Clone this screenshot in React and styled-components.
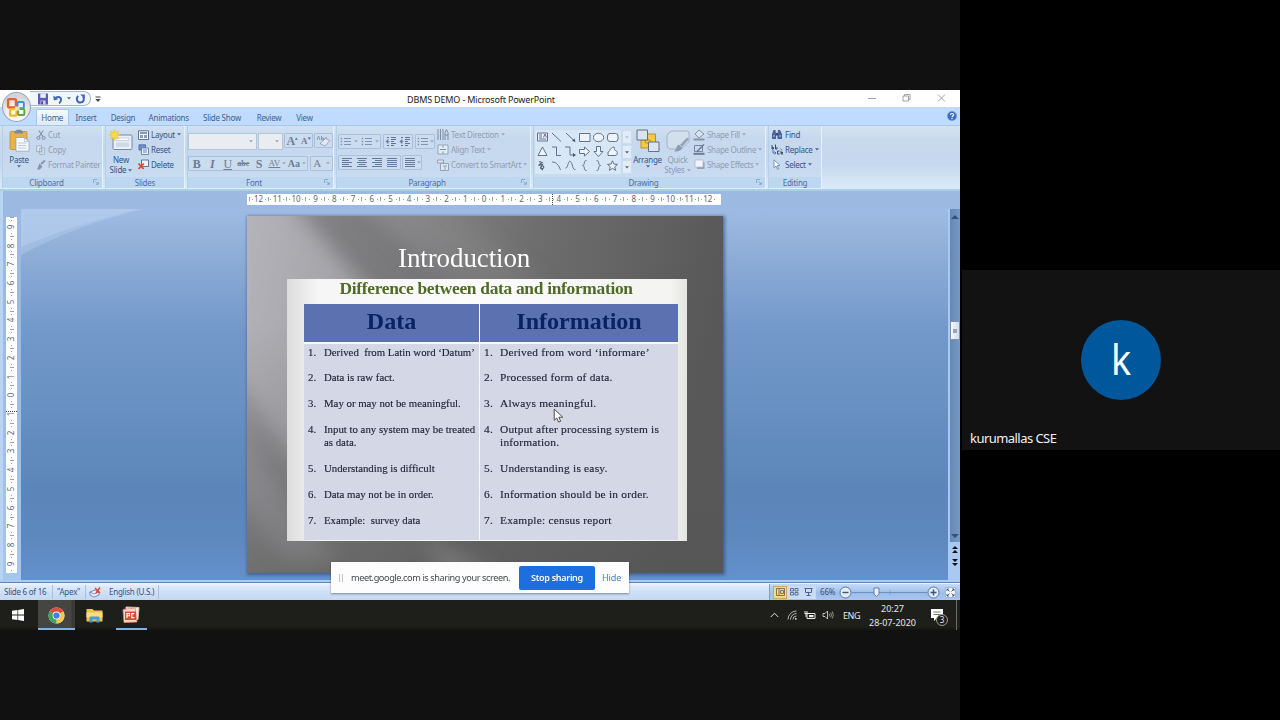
import React from 'react';
import styled, { createGlobalStyle, css } from 'styled-components';

const Global = createGlobalStyle`
  * { box-sizing: border-box; }
  html, body { margin: 0; padding: 0; background: #000; }
  body { width: 1280px; height: 720px; overflow: hidden; font-family: "Noto Sans", "Open Sans", sans-serif; }
  svg { display: block; flex: none; }
`;

const Page = styled.div`
  display: flex;
  width: 1280px;
  height: 720px;
  background: #000;
`;
const Share = styled.main`
  width: 960px;
  height: 720px;
  padding: 90px 0;
  background: #111111;
`;
const Desktop = styled.div`
  position: relative;
  display: flex;
  flex-direction: column;
  width: 960px;
  height: 540px;
`;

const T = styled.span`
  font-size: ${p => p.$s || 8}px;
  letter-spacing: ${p => p.$ls ?? -0.24}px;
  color: ${p => p.$c || 'inherit'};
  font-weight: ${p => p.$b || 400};
  white-space: pre;
  line-height: 1;
`;

/* ---------- title bar ---------- */
const TitleBar = styled.header`
  position: relative;
  display: flex;
  align-items: center;
  justify-content: center;
  height: 17px;
  background: #fff;
  padding: 1px 0 0 2px;
`;
const QuickAccess = styled.div`
  position: absolute;
  left: 30px;
  top: 1px;
  display: flex;
  align-items: center;
  gap: 4px;
  width: 61px;
  height: 15px;
  padding-left: 7px;
  background: #f1f5fc;
  border: 1px solid #a9b5cc;
  border-left: 0;
  border-radius: 0 7px 7px 0;
`;
const QuickMore = styled.div`
  position: absolute;
  left: 95px;
  top: 6px;
`;
const WindowButtons = styled.div`
  position: absolute;
  right: 14px;
  top: 3px;
  display: flex;
  gap: 26px;
`;
const OfficeButton = styled.div`
  position: absolute;
  left: 2px;
  top: 2px;
  z-index: 3;
  display: grid;
  place-items: center;
  width: 29px;
  height: 30px;
  border-radius: 50%;
  border: 1px solid #98a3b5;
  background: radial-gradient(circle at 50% 75%, #fff 0, #f1f1f1 35%, #cfd3dc 75%, #eef0f4 100%);
`;

/* ---------- tabs ---------- */
const TabRow = styled.nav`
  display: flex;
  align-items: flex-end;
  height: 18px;
  padding-left: 36px;
  background: #bfdbff;
`;
const Tab = styled.div`
  display: flex;
  align-items: center;
  justify-content: center;
  width: ${p => p.$w}px;
  height: 16px;
  padding-top: 1px;
  color: #3f5f92;
  ${p => p.$on && css`
    background: linear-gradient(#f5faff, #dfeaf8);
    border: 1px solid #a7c6ee;
    border-bottom: 0;
    border-radius: 2px 2px 0 0;
    padding-top: 0;
  `}
`;
const HelpSlot = styled.div`
  margin: 0 3px 4px auto;
`;

/* ---------- ribbon ---------- */
const Ribbon = styled.section`
  display: flex;
  gap: 2px;
  height: 66px;
  padding: 0 0 0 2px;
  border-top: 1px solid #a9c8e8;
  border-bottom: 2px solid #a8d0e2;
  background: linear-gradient(#d4e2f1 0, #c9d9ec 22%, #c5d8ee 60%, #d9ebf9 100%);
`;
const Group = styled.div`
  display: flex;
  flex-direction: column;
  width: ${p => p.$w}px;
  border-right: 1px solid #e6f2fb;
  border-left: 1px solid #b4cfe8;
  border-bottom: 1px solid #e2f1fa;
  background: linear-gradient(#d2e1f2 0, #c5d8ed 20%, #c7daef 75%, #cfe1f3 100%);
`;
const GroupBody = styled.div`
  display: flex;
  height: 51px;
  padding: ${p => p.$p || '0'};
`;
const GroupTitle = styled.div`
  display: flex;
  align-items: center;
  justify-content: center;
  position: relative;
  height: 11px;
  padding-right: ${p => p.$pr || 0}px;
  color: #4a6ea6;
  background: #bed7f1;
`;
const Launcher = styled.div`
  position: absolute;
  right: 3px;
  top: 2px;
`;
const BigButton = styled.div`
  display: flex;
  flex-direction: column;
  align-items: center;
  width: ${p => p.$w}px;
  padding-top: 3px;
  color: ${p => (p.$dim ? '#8e9bb0' : '#33548c')};
`;
const BigText = styled.div`
  display: flex;
  align-items: center;
  gap: 2px;
  height: 10px;
  margin-top: ${p => p.$mt || 0}px;
`;
const Stack = styled.div`
  display: flex;
  flex-direction: column;
  padding-top: 1px;
  margin-left: ${p => p.$ml || 0}px;
`;
const Command = styled.div`
  display: flex;
  align-items: center;
  gap: ${p => p.$g || 2}px;
  height: 15px;
  color: ${p => (p.$dim ? '#909db0' : '#33548c')};
`;
const ToolArea = styled.div`
  padding-top: ${p => p.$pt}px;
`;
const ToolRow = styled.div`
  display: flex;
  gap: ${p => p.$g || 2}px;
  padding-top: ${p => p.$pt || 0}px;
  margin-bottom: ${p => p.$mb || 0}px;
`;
const Combo = styled.div`
  display: flex;
  align-items: center;
  justify-content: flex-end;
  width: ${p => p.$w}px;
  height: 17px;
  padding-right: 3px;
  background: #e9edf1;
  border: 1px solid #b6c6da;
`;
const ToolBox = styled.div`
  display: flex;
  align-items: center;
  justify-content: ${p => (p.$start ? 'flex-start' : 'space-around')};
  width: ${p => p.$w}px;
  height: 15px;
  border: 1px solid #a9c0dc;
  border-radius: 1px;
  background: #cbdcef;
  color: #6c7d98;
`;
const Glyph = styled.span`
  width: ${p => (p.$w ? p.$w + 'px' : 'auto')};
  text-align: center;
  font: ${p => p.$f || ''} ${p => p.$s || 10}px/1 "Liberation Serif", serif;
  text-decoration: ${p => p.$d || 'none'};
`;
const Tip = styled.sup`
  font-size: 5px;
`;

const Gallery = styled.div`
  display: grid;
  grid-template-columns: repeat(6, 14px);
  grid-auto-rows: 14px;
  place-items: center;
  width: 86px;
  height: 44px;
  padding: 1px;
  background: #d8e7f5;
`;
const GalleryScroll = styled.div`
  display: flex;
  flex-direction: column;
  gap: 1px;
  width: 10px;
  height: 44px;
`;
const ScrollStep = styled.div`
  display: grid;
  place-items: center;
  flex: 1;
  border: 1px solid #cddceb;
  background: #e1ecf7;
`;

/* ---------- work area ---------- */
const Work = styled.section`
  display: grid;
  grid-template-columns: 21px 1fr 12px;
  grid-template-rows: 18px 371px;
  height: 389px;
  background: linear-gradient(#9bb9e1 0, #9bb9e1 30%, #a6c6ee 100%);
`;
const TopRulerSlot = styled.div`
  grid-column: 1 / 4;
  padding: 3px 0 0 244px;
  border-left: 3px solid #b9d3f3;
`;
const HRuler = styled.div`
  display: flex;
  justify-content: center;
  width: 474px;
  height: 11px;
  padding-right: 2px;
  background: #fff;
  position: relative;
`;
const HCell = styled.div`
  display: flex;
  align-items: center;
  justify-content: space-between;
  width: 18.72px;
  height: 10px;
  padding-right: 2px;
  color: #5d6470;
`;
const VCell = styled.div`
  display: flex;
  flex-direction: column;
  align-items: center;
  justify-content: space-between;
  height: 18.72px;
  padding-bottom: 2px;
  color: #5d6470;
`;
const Tick = styled.i`
  width: ${p => (p.$v ? 4 : 1)}px;
  height: ${p => (p.$v ? 1 : 4)}px;
  background: #98a0ac;
`;
const Dot = styled.i`
  width: 1px;
  height: 1px;
  background: #98a0ac;
`;
const HMark = styled.div`
  position: absolute;
  left: 305px;
  top: 0;
  height: 11px;
  border-left: 1px dotted #444;
`;
const LeftRulerSlot = styled.div`
  padding: 8px 0 0 3px;
  border-left: 3px solid #b9d3f3;
`;
const VRuler = styled.div`
  position: relative;
  display: flex;
  flex-direction: column;
  width: 11px;
  height: 356px;
  background: #fff;
`;
const VNum = styled.span`
  font-size: 8px;
  line-height: 8px;
  height: 8px;
  transform: rotate(-90deg);
`;
const VMark = styled.div`
  position: absolute;
  left: 0;
  top: 194px;
  width: 11px;
  border-top: 1px dotted #444;
`;
const Canvas = styled.div`
  position: relative;
  padding: 7px 0 0 226px;
  background: linear-gradient(#9dbbe4 0, #94b2da 8%, #83a5d3 20%, #7298c9 33%, #6a92c3 50%, #5c86b9 75%, #5d88be 88%, #6391cc 100%);
`;
const Swoosh = styled.svg`
  position: absolute;
  left: 0;
  top: 0;
`;
const Slide = styled.article`
  position: relative;
  width: 476px;
  height: 357px;
  overflow: hidden;
  background: #5c5c5c;
`;
const SlideShadow = styled.div`
  position: relative;
  width: 476px;
  box-shadow: 1px 1px 3px 1px rgba(40, 60, 100, 0.55);
`;
const SlideArt = styled.svg`
  position: absolute;
  inset: 0;
`;
const SlideTitle = styled.h1`
  position: relative;
  margin: 0;
  padding: 28px 0 0 151px;
  height: 63px;
  font: 400 27px/28px "Liberation Serif", serif;
  letter-spacing: -0.1px;
  color: #fff;
`;
const Board = styled.div`
  position: relative;
  width: 400px;
  height: 262px;
  margin-left: 39.5px;
  padding: 0 9px 0 17.5px;
  background: linear-gradient(90deg, #dcdcdd, #f6f6f6 8%, #fbfbfb 50%, #f3f3f2 96%, #e4e4df);
`;
const BoardTitle = styled.h2`
  margin: 0;
  height: 25px;
  padding-left: 35.5px;
  font: 700 17.4px/18px "Liberation Serif", serif;
  letter-spacing: -0.3px;
  white-space: nowrap;
  color: #4f6b25;
`;
const Table = styled.div`
  display: grid;
  grid-template-columns: 175px 198px;
  grid-template-rows: 38px 196px;
  gap: 1.5px 1px;
  background: #f7f8fc;
`;
const Th = styled.div`
  display: flex;
  align-items: center;
  justify-content: center;
  padding-bottom: 5px;
  background: #5c71b0;
  color: #0b2262;
  font: 700 24px/1 "Liberation Serif", serif;
`;
const Td = styled.ol`
  display: flex;
  flex-direction: column;
  gap: 13px;
  margin: 0;
  padding: ${p => p.$pt}px 0 0 4px;
  list-style: none;
  background: #d3d7e6;
  color: #23263a;
  font: 400 ${p => p.$s}px/12.95px "Liberation Serif", serif;
  letter-spacing: ${p => p.$ls}px;
  -webkit-text-stroke: 0.15px #23263a;
`;
const Item = styled.li`
  display: flex;
  white-space: pre;
`;
const Num = styled.span`
  width: 16px;
`;
const Cursor = styled.svg`
  position: absolute;
  left: 553px;
  top: 318px;
`;
const VScroll = styled.div`
  display: flex;
  flex-direction: column;
  align-items: center;
  border-left: 2px solid #a9c8f2;
  background: #a9c9f3;
`;
const Track = styled.div`
  display: flex;
  flex-direction: column;
  align-items: center;
  width: 10px;
  height: 333px;
  padding: 5px 0 3px;
  background: linear-gradient(90deg, #6488b4, #7799c4);
`;
const Thumb = styled.div`
  display: grid;
  place-items: center;
  width: 10px;
  height: 19px;
  margin: 102px 0 auto;
  background: linear-gradient(90deg, #f5f8fc, #cfdcec);
  border: 1px solid #7f93b0;
`;
const ThumbGrip = styled.div`
  width: 4px;
  height: 4px;
  background: #98a4b4;
`;
const PageArrows = styled.div`
  display: flex;
  flex-direction: column;
  gap: 6px;
  padding-top: 4px;
`;

/* ---------- status bar ---------- */
const Status = styled.footer`
  display: flex;
  align-items: center;
  height: 20px;
  padding: 4px 0 0 4px;
  color: #38527f;
  background: linear-gradient(#a9ccf6 0, #a9ccf6 10%, #5f84b8 11%, #5f84b8 15%, #eef5fd 16%, #dde9fa 32%, #cfe0f7 60%, #c3d8f3 100%);
`;
const Cell = styled.div`
  display: flex;
  align-items: center;
  width: ${p => p.$w}px;
  height: 14px;
  padding-left: ${p => p.$pl || 0}px;
  border-right: 1px solid ${p => (p.$line ? '#a9bfdd' : 'transparent')};
`;
const StatusRight = styled.div`
  display: flex;
  align-items: center;
  width: 191px;
  height: 16px;
  margin-left: auto;
  border-left: 1px solid #7f9fca;
  background: linear-gradient(#c5daf6, #9dbde9 60%, #a9c6ef);
`;
const Views = styled.div`
  display: flex;
  align-items: center;
  width: 43px;
  height: 13px;
  margin-left: 3px;
  background: #cadcf4;
`;
const View = styled.div`
  display: grid;
  place-items: center;
  width: 14.3px;
  height: 13px;
  ${p => p.$on && css`
    background: #fbd58a;
    border: 1px solid #d9a552;
  `}
`;

/* ---------- taskbar ---------- */
const Taskbar = styled.footer`
  display: flex;
  height: 30px;
  background: linear-gradient(#1e1e1b 0, #1e1e1b 88%, #141412 100%);
  color: #e8e8e8;
`;
const Task = styled.div`
  display: grid;
  place-items: center;
  width: ${p => p.$w}px;
  height: 30px;
  padding-right: ${p => p.$pr || 0}px;
  background: ${p => (p.$on ? 'linear-gradient(90deg, #454543 0, #454543 90%, #393937 91%)' : 'none')};
  ${p => p.$run && css`
    border-bottom: 2px solid #7db4e6;
    padding-top: 2px;
  `}
`;
const Tray = styled.div`
  display: flex;
  align-items: center;
  margin-left: auto;
`;
const TrayCell = styled.div`
  display: flex;
  justify-content: center;
  width: ${p => p.$w}px;
`;
const Clock = styled.div`
  display: flex;
  flex-direction: column;
  align-items: center;
  gap: 5px;
  width: 53px;
`;
const PeekLine = styled.div`
  width: 1px;
  height: 30px;
  margin-right: 3px;
  background: #6d6d6a;
`;
const Badge = styled.div`
  position: relative;
`;
const Count = styled.div`
  position: absolute;
  left: 5px;
  top: 5px;
  display: grid;
  place-items: center;
  width: 12px;
  height: 12px;
  border: 1px solid #9b9b98;
  border-radius: 50%;
  background: #1f1f1c;
`;

/* ---------- share bar ---------- */
const ShareBar = styled.div`
  position: absolute;
  left: 331px;
  top: 472px;
  z-index: 4;
  display: flex;
  align-items: center;
  width: 298px;
  height: 31px;
  padding-left: 8px;
  background: #fdfdfe;
  box-shadow: 0 1px 2px rgba(0, 0, 0, 0.4);
  color: #45484c;
`;
const Grip = styled.div`
  width: 4px;
  height: 8px;
  margin-right: 8px;
  border: solid #bfc1c4;
  border-width: 0 1px;
`;
const Message = styled.div`
  display: flex;
  width: 168px;
`;
const StopButton = styled.div`
  display: grid;
  place-items: center;
  width: 76px;
  height: 24px;
  margin-right: 7px;
  border-radius: 2px;
  background: #1b6fe0;
  color: #fff;
`;

/* ---------- participant ---------- */
const Side = styled.aside`
  display: flex;
  align-items: center;
  width: 320px;
  padding-left: 2px;
`;
const Tile = styled.div`
  display: flex;
  flex-direction: column;
  width: 318px;
  height: 180px;
  padding-top: 50px;
  background: #121212;
`;
const Avatar = styled.div`
  display: grid;
  place-items: center;
  width: 80px;
  height: 80px;
  margin-left: 119px;
  padding-bottom: 2px;
  border-radius: 50%;
  background: #01579b;
  color: #fff;
  font: 400 41px/1 "Noto Sans", sans-serif;
`;
const Initial = styled.span`
  transform: scaleX(0.92);
`;
const Name = styled.div`
  display: flex;
  margin: 32px 0 0 8px;
  color: #f1f1f1;
`;

/* ---------- icons ---------- */
const Ico = ({ w = 11, h = w, vb, children }) => (
  <svg width={w} height={h} viewBox={vb || `0 0 ${w} ${h}`} fill="none" strokeLinecap="butt">{children}</svg>
);
const Caret = ({ c = '#4b6594' }) => <Ico w={4} h={3}><path d="M0 .3h4L2 2.6z" fill={c} /></Ico>;
const DimCaret = () => <Caret c="#9aa8bd" />;

const SaveIcon = () => <Ico w={12}><path d="M1 .5h10v11H1z" fill="#5d5ab4" /><path d="M3.3.5h5.5v4.4H3.3z" fill="#e8ecfa" /><path d="M3.5 7.5h5v4h-5z" fill="#cfd0ee" /><path d="M4.3 8.2h1.6v3H4.3z" fill="#34348a" /></Ico>;
const UndoIcon = () => <Ico w={10}><path d="M2 4.500C4 2 8.200 2.500 8 5.800 7.900 7.600 7 8.800 6 9.200" stroke="#4167b8" strokeWidth="2" /><path d="M.3 1.500l.5 5 4.400-1.300z" fill="#4167b8" /></Ico>;
const RedoIcon = () => <Ico w={11} h={10}><path d="M3 1.800C.8 4.500 2 8.600 5.200 8.600c3.400 0 4.700-3.600 2.900-6" stroke="#3f63b5" strokeWidth="2" /><path d="M5.200.5h4.600v4.200z" fill="#3f63b5" /></Ico>;
const OfficeLogo = () => (
  <Ico w={21} h={21} vb="0 0 20 20">
    <rect x="2" y="2" width="7.500" height="8" rx="1" stroke="#e0662a" strokeWidth="2.300" />
    <rect x="11" y="4.700" width="6" height="6" rx="1" stroke="#3d8fd8" strokeWidth="1.800" />
    <rect x="4" y="11.500" width="6" height="6.300" rx="1" stroke="#f2b824" strokeWidth="2.200" />
    <rect x="11.500" y="11.500" width="6" height="5.700" rx="1" stroke="#62a845" strokeWidth="1.900" />
    <path d="M8.500 9h4.500v4H8.500z" fill="#fdf0d0" opacity=".8" />
  </Ico>
);
const HelpIcon = () => <Ico w={10}><circle cx="5" cy="5" r="4.700" fill="#3c6fc4" stroke="#7ea2d8" strokeWidth=".6" /><path d="M3.400 3.900c.1-2 3.300-1.900 3.200 0C6.500 5 5 4.900 5 6.200M5 7.100v1.200" stroke="#fff" strokeWidth="1.100" /></Ico>;

const PasteIcon = () => (
  <Ico w={21} h={23}>
    <rect x="1" y="2.500" width="17" height="18" rx="1" fill="#e9b14c" stroke="#bb8530" strokeWidth=".7" />
    <path d="M5.500 4.500V2.500L8 .8h3.500l2.500 1.700v2z" fill="#7e8896" />
    <path d="M7 8.500h8.500l4.500 4v9.700H7z" fill="#f7fafd" stroke="#8b9bb5" strokeWidth=".7" />
    <path d="M15.500 8.500v4H20M9 14h8.500M9 16.500h8.500M9 19h8.500" stroke="#a6b4ca" strokeWidth=".7" />
  </Ico>
);
const CutIcon = () => <Ico w={10}><path d="M2.800.5l4 6M7.200.5l-4 6" stroke="#7f8fa8" strokeWidth="1.100" /><circle cx="2.400" cy="7.900" r="1.500" stroke="#7f8fa8" /><circle cx="7.600" cy="7.900" r="1.500" stroke="#7f8fa8" /></Ico>;
const CopyIcon = () => <Ico w={10}><path d="M.7.700h4.800v6H.7zM3.700 3h5v6.300h-5z" fill="#dfe8f2" stroke="#94a3ba" strokeWidth=".8" /><path d="M5 5h2.500M5 7h2.500" stroke="#94a3ba" strokeWidth=".7" /></Ico>;
const BrushIcon = () => <Ico w={10}><path d="M8.800.5L5.200 4" stroke="#8594ac" strokeWidth="1.800" /><path d="M3.500 3.600l3 2.900-2.600 3H1z" fill="#8594ac" /></Ico>;
const EraserIcon = () => <Ico w={15} h={12}><path d="M1 5l1.500-4L4 5M5.500 1v4h2V3h-2M11 3H9v2h2" stroke="#7a8aa4" strokeWidth=".8" /><path d="M4 8.500L9.500 3.500 14 5.500 9 11z" fill="#e3ebf5" stroke="#8c9bb3" strokeWidth=".8" /></Ico>;
const NewSlideIcon = () => (
  <Ico w={24} h={22}>
    <rect x="4" y="6" width="19" height="14.500" rx="1" fill="#eaf0f8" stroke="#7488a8" />
    <path d="M7 9h13v2.500H7z" fill="#fff" stroke="#a9b7cc" strokeWidth=".6" /><path d="M7 13.500h13v4.500H7z" fill="#cfd9e8" />
    <path d="M5.500.5l1 3 3-1.500-1 3 3 .8-3 1.200 1 3-3-1.300-1 2.800-1-2.800-3 1.300 1-3-2-1.200 2-.8-1-3 3 1.500z" fill="#f8d845" stroke="#e6b92e" strokeWidth=".5" />
  </Ico>
);
const LayoutIcon = () => <Ico w={11} h={10}><path d="M.5.800h10v8.700H.5z" fill="#f2f6fb" stroke="#5f7496" /><path d="M2 3h7" stroke="#5f7496" strokeWidth="1.400" /><path d="M2 5h3v3H2zM6 5h3v3H6z" fill="#8ba0c0" /></Ico>;
const ResetIcon = () => <Ico w={11} h={11}><path d="M1 .8h6.500V6H1z" fill="#6a93d4" stroke="#3f62a5" strokeWidth=".8" /><path d="M3.500 4h7v6.500h-7z" fill="#eef3fa" stroke="#5f7496" strokeWidth=".8" /><path d="M5 6h4M5 8h4" stroke="#5f86c0" /></Ico>;
const DeleteIcon = () => <Ico w={11} h={11}><path d="M3.500 1h7v6.500h-7z" fill="#eef3fa" stroke="#50678f" strokeWidth=".9" /><path d="M.6 4.500l5 5.500M5.800 4.500L.6 10" stroke="#e04a2b" strokeWidth="1.800" /></Ico>;

const Lines = ({ w = 12, a = [10, 7, 10, 7, 10], al = 'l' }) => (
  <Ico w={w} h={9}>{a.map((n, i) => {
    const x = al === 'l' ? 1 : al === 'c' ? (w - n) / 2 : w - 1 - n;
    return <path key={i} d={`M${x} ${0.5 + i * 2}h${n}`} stroke="#6379a0" />;
  })}</Ico>
);
const full = [10, 10, 10, 10, 10];
const Bullets = () => <Ico w={12} h={9}><path d="M4 1.500h7M4 4.500h7M4 7.500h7" stroke="#8093b2" /><path d="M.7 1.500h1.500M.7 4.500h1.500M.7 7.500h1.500" stroke="#8093b2" strokeWidth="1.300" /></Ico>;
const Indent = () => <Ico w={12} h={9}><path d="M6 .5h5M6 2.500h5M6 4.500h3M6 6.500h5M6 8.500h3M2 .5h2M2 8.500h2" stroke="#5e7294" /><path d="M1 4.500l2-2v4zM3 4.500h1.500" fill="#5e7294" stroke="#5e7294" strokeWidth=".6" /></Ico>;
const TextDirIcon = () => <Ico w={12} h={11}><path d="M1 0v11M3.500 0v11M6 0v11M8 11V3.500l1.500-3 1.500 3V11M8 6h3" stroke="#7f8ea6" /></Ico>;
const AlignTextIcon = () => <Ico w={12} h={11}><path d="M1 1h10v9H1z" fill="#e3ebf4" stroke="#94a3ba" /><path d="M3 5.500h6M6 1.500v2M6 7.500v2" stroke="#7f8ea6" /></Ico>;
const SmartIcon = () => <Ico w={12} h={12}><path d="M.5 1h6v3h-6zM3.500 4.500h8v7h-8z" fill="#dfe7f1" stroke="#94a3ba" /><path d="M6 7h4M8 7v4" stroke="#94a3ba" /></Ico>;

const shapePaths = [
  <><path d="M.5 1h10v8H.5z" fill="#e8eff8" /><path d="M2 3h3M2 5h3M2 7h7M6.500 5.500L8 2l1.500 3.500" /></>,
  <path d="M1 1l9 8.500" />,
  <><path d="M1 1l8 7.500" /><path d="M10.500 10l-3.500-1L9.500 6.500z" fill="#46536b" stroke="none" /></>,
  <path d="M.5 1.500h10.500v8H.5z" fill="#eef4fb" />,
  <ellipse cx="5.500" cy="5.500" rx="5.200" ry="4.200" fill="#eef4fb" />,
  <rect x=".5" y="1.500" width="10.500" height="8" rx="2.500" fill="#eef4fb" />,
  <path d="M5.500 1L10 9.500H1z" fill="#eef4fb" />,
  <path d="M1 1h4.500v8.500H10" />,
  <><path d="M0 1h5v8h3" /><path d="M11 9L8 7v4z" fill="#46536b" stroke="none" /></>,
  <path d="M.5 3.500h5V1L10.500 5.500 5.500 10V7.500h-5z" fill="#eef4fb" />,
  <path d="M3.500.5v5H1l4.500 5 4.500-5H7.500v-5z" fill="#eef4fb" />,
  <path d="M1 9.500V6C3 6 2.500 1.500 7 1c1 0-.5 3 1.500 3.500C11 5 11 9.500 8 9.500z" fill="#eef4fb" />,
  <path d="M2 1.500l3 1-3.500 3 4-1-2 3.500c2 2 4.500-1 2.500-2S2.500 8 6 10" strokeWidth="1.200" />,
  <path d="M1 2c5 0 7 4 8.500 8" />,
  <path d="M.5 8C3 9 3-.5 5.500 1.500S7 10 10.500 9.500" />,
  <path d="M7.500.5C4 .5 6.500 5 3.500 5.500 6.500 6 4 10.500 7.500 10.500" />,
  <path d="M3.500.5C7 .5 4.500 5 7.500 5.500 4.500 6 7 10.500 3.500 10.500" />,
  <path d="M5.500.8l1.400 3.300 3.600.3-2.700 2.400.8 3.500-3.100-1.900-3.100 1.900.8-3.500L.5 4.400l3.600-.3z" fill="#eef4fb" />,
];
const ArrangeIcon = () => <Ico w={24} h={24}><path d="M9.500 5h10v9h-10zM5 11h9v8H5z" fill="#f7c93f" stroke="#b8902a" /><path d="M1 1h10.500v10H1zM12.500 13h10.500v9.500H12.500z" fill="#dbe3ec" stroke="#61718a" /></Ico>;
const QuickIcon = () => <Ico w={24} h={24}><path d="M6 2h15q2 0 2 2v9q-5 5-8 7H4q-3-1-3-4V7q1-4 5-5z" fill="#d4dfec" stroke="#a4b3c8" /><path d="M22 9.500l-7 7.500" stroke="#98a7bd" strokeWidth="3" /><path d="M12.500 15.500l4 3.500c-2 3-5 3.500-8.500 3.500 2-1 2.500-5.500 4.500-7z" fill="#8b9ab2" /></Ico>;
const FillIcon = () => <Ico w={12} h={12}><path d="M6 1l5 4-5 4-4-4z" fill="#d9e2ee" stroke="#8291a9" /><path d="M.5 9.500h11V11.500H.5z" fill="#8794a8" /></Ico>;
const OutlineIcon = () => <Ico w={12} h={12}><path d="M1.500 1.500h8v6h-8z" stroke="#7686a0" /><path d="M11 .5L4 7.500" stroke="#6a7a95" strokeWidth="1.500" /><path d="M.5 9.800h11" stroke="#6d7b92" strokeWidth="2" /></Ico>;
const EffectsIcon = () => <Ico w={12} h={12}><path d="M4 3h7.500v7H4z" fill="#93a1b7" /><path d="M2 1h8v7H2z" fill="#f0f4f9" stroke="#a7b4c8" strokeWidth=".7" /></Ico>;
const FindIcon = () => <Ico w={12} h={11}><path d="M1 5l1.500-4h2L5 5v5H1zM6.500 5L7 1h2l2 4v5H6.500z" fill="#48649c" /><path d="M5 4h2v2.500H5z" fill="#2f4a82" /><path d="M2 7h2M8 7h2" stroke="#b9c9e4" /></Ico>;
const ReplaceIcon = () => <Ico w={12} h={12}><path d="M1 1v4M1 3.500h1.500v1.500H1M4.500.5V5H6V3M8.500 7h-2v3h2M10 7v3h2V8.500h-2" stroke="#3c4a63" /><path d="M2 6v3h2.500M3.500 7.500L5 9 3.500 10.500" stroke="#3f6ab3" strokeWidth=".9" /><path d="M9.500 4.500l1.500 2" stroke="#3f9a48" /></Ico>;
const PointerIcon = () => <Ico w={12} h={12}><path d="M3 .8v8l2-1.800L6.500 10.500l1.300-.6L6.300 6.500H9z" fill="#fff" stroke="#6680ae" strokeWidth=".8" /></Ico>;
const LauncherIcon = () => <Ico w={6}><path d="M.5 4V.5H4" stroke="#7f9cc6" strokeWidth=".8" /><path d="M2.500 2.500L5 5M5.300 3v2.300H3" stroke="#7f9cc6" strokeWidth=".8" /></Ico>;

const ChromeIcon = () => (
  <Ico w={17} vb="0 0 18 18">
    <circle cx="9" cy="9" r="8.500" fill="#f3f3f3" />
    <path d="M9 9L1.640 4.750A8.500 8.500 0 0 1 16.360 4.750z" fill="#e04a3a" />
    <path d="M9 9l7.360-4.250A8.500 8.500 0 0 1 9 17.500z" fill="#f6c945" />
    <path d="M9 9v8.500A8.500 8.500 0 0 1 1.640 4.750z" fill="#3ba55c" />
    <circle cx="9" cy="9" r="4.200" fill="#f2f2f2" /><circle cx="9" cy="9" r="3.300" fill="#3f7fe8" />
  </Ico>
);
const FolderIcon = () => <Ico w={17} h={15}><path d="M.5 1h6l1.500 1.500h8.500v11H.5z" fill="#eec24f" /><path d="M.5 4.500h16v5H.5z" fill="#f9dd84" /><path d="M3.500 14.500V9.500q0-1 1-1h8q1 0 1 1v5h-3v-3h-4v3z" fill="#4a9ad6" /></Ico>;
const PptIcon = () => <Ico w={18} h={18}><path d="M4 1l13 .5-1 12L4 15z" fill="#fae9e1" stroke="#e9b8a2" /><path d="M1 3.500l12-1.500 2 14-13 .5z" fill="#f7d9cb" stroke="#dd8b6c" strokeWidth=".8" /><path d="M3 5.500h11v8.500H3z" fill="#d2522b" /><path d="M5 12V7.500h2.500v2.200H5M12.300 7.600H9.800v4h2.500" stroke="#fff" strokeWidth="1.100" /></Ico>;
const StartIcon = () => <Ico w={12}><path d="M0 1.800L5.500 1v4.600H0zM6.200.9L12 0v5.600H6.200zM0 6.400h5.500V11L0 10.200zM6.200 6.400H12V12l-5.800-.9z" fill="#fff" /></Ico>;

/* ---------- content ---------- */
const tabs = [
  ['Home', 32.500, 1], ['Insert', 35], ['Design', 39], ['Animations', 52.500], ['Slide Show', 54], ['Review', 40], ['View', 31],
];
const hNums = Array.from({ length: 25 }, (_, i) => Math.abs(i - 12));
const vNums = Array.from({ length: 19 }, (_, i) => Math.abs(i - 9));
const dataList = ['Derived  from Latin word ‘Datum’', 'Data is raw fact.', 'May or may not be meaningful.', 'Input to any system may be treated\nas data.', 'Understanding is difficult', 'Data may not be in order.', 'Example:  survey data'];
const infoList = ['Derived from word ‘informare’', 'Processed form of data.', 'Always meaningful.', 'Output after processing system is\ninformation.', 'Understanding is easy.', 'Information should be in order.', 'Example: census report'];

const Cmd = ({ icon, text, caret, dim, ls }) => (
  <Command $dim={dim}>{icon}<T $ls={ls}>{text}</T>{caret && (dim ? <DimCaret /> : <Caret />)}</Command>
);
const List = ({ items, ...rest }) => (
  <Td {...rest}>{items.map((t, i) => <Item key={i}><Num>{i + 1}.</Num><span>{t}</span></Item>)}</Td>
);

function RibbonBar() {
  return (
    <Ribbon>
      <Group $w={101}>
        <GroupBody>
          <BigButton $w={32}><PasteIcon /><BigText $mt={3}><T>Paste</T></BigText><Caret /></BigButton>
          <Stack $ml={1}>
            <Cmd dim icon={<CutIcon />} text="Cut" />
            <Cmd dim icon={<CopyIcon />} text="Copy" />
            <Cmd dim icon={<BrushIcon />} text="Format Painter" ls={-0.27} />
          </Stack>
        </GroupBody>
        <GroupTitle $pr={12}><T>Clipboard</T><Launcher><LauncherIcon /></Launcher></GroupTitle>
      </Group>
      <Group $w={80}>
        <GroupBody>
          <BigButton $w={30}><NewSlideIcon /><BigText $mt={4}><T>New</T></BigText><BigText><T>Slide</T><Caret /></BigText></BigButton>
          <Stack $ml={2}>
            <Cmd icon={<LayoutIcon />} text="Layout" caret />
            <Cmd icon={<ResetIcon />} text="Reset" />
            <Cmd icon={<DeleteIcon />} text="Delete" />
          </Stack>
        </GroupBody>
        <GroupTitle><T>Slides</T></GroupTitle>
      </Group>
      <Group $w={147}>
        <GroupBody>
          <ToolArea $pt={7}>
            <ToolRow $g={1} $mb={6}>
              <Combo $w={69}><DimCaret /></Combo>
              <Combo $w={25}><DimCaret /></Combo>
              <ToolBox $w={29}><Glyph $s={12} $f="700">A<Tip>▴</Tip></Glyph><Glyph $f="700" $s={9}>A<Tip>▾</Tip></Glyph></ToolBox>
              <ToolBox $w={19}><EraserIcon /></ToolBox>
            </ToolRow>
            <ToolRow>
              <ToolBox $w={120} $start>
                <Glyph $w={15.5} $f="700" $s={12}>B</Glyph><Glyph $w={15.5} $f="italic 700" $s={12}>I</Glyph><Glyph $w={15.5} $s={12} $d="underline">U</Glyph>
                <Glyph $w={15.7} $f="700" $s={8} $d="line-through">abc</Glyph><Glyph $w={15.7} $f="700" $s={12}>S</Glyph>
                <Glyph $w={15} $s={9} $d="underline">AV</Glyph><DimCaret /><Glyph $w={16} $f="700" $s={10}>Aa</Glyph><DimCaret />
              </ToolBox>
              <ToolBox $w={23}><Glyph $s={11}>A</Glyph><DimCaret /></ToolBox>
            </ToolRow>
          </ToolArea>
        </GroupBody>
        <GroupTitle $pr={13}><T>Font</T><Launcher><LauncherIcon /></Launcher></GroupTitle>
      </Group>
      <Group $w={195}>
        <GroupBody $p="0 0 0 1px">
          <ToolArea $pt={8}>
            <ToolRow $mb={6}>
              <ToolBox $w={43}><Bullets /><DimCaret /><Bullets /><DimCaret /></ToolBox>
              <ToolBox $w={30}><Indent /><Indent /></ToolBox>
              <ToolBox $w={20}><Bullets /><DimCaret /></ToolBox>
            </ToolRow>
            <ToolRow $g={1}>
              <ToolBox $w={63}><Lines /><Lines al="c" /><Lines al="r" /><Lines a={full} /></ToolBox>
              <ToolBox $w={20}><Lines a={full} /><DimCaret /></ToolBox>
            </ToolRow>
          </ToolArea>
          <Stack $ml={2}>
            <Cmd dim icon={<TextDirIcon />} text="Text Direction" caret ls={-0.27} />
            <Cmd dim icon={<AlignTextIcon />} text="Align Text" caret ls={-0.27} />
            <Cmd dim icon={<SmartIcon />} text="Convert to SmartArt" caret ls={-0.27} />
          </Stack>
        </GroupBody>
        <GroupTitle $pr={13}><T>Paragraph</T><Launcher><LauncherIcon /></Launcher></GroupTitle>
      </Group>
      <Group $w={233}>
        <GroupBody $p="0 0 0 1px">
          <ToolRow $g={1} $pt={4}>
            <Gallery>{shapePaths.map((s, i) => <svg key={i} width="12" height="12" viewBox="0 0 12 12" fill="none" stroke="#56647e" strokeWidth=".9">{s}</svg>)}</Gallery>
            <GalleryScroll><ScrollStep><Caret c="#b5c2d4" /></ScrollStep><ScrollStep><Caret /></ScrollStep><ScrollStep><Caret /></ScrollStep></GalleryScroll>
          </ToolRow>
          <BigButton $w={31}><ArrangeIcon /><BigText $mt={2}><T>Arrange</T></BigText><Caret /></BigButton>
          <BigButton $w={29} $dim><QuickIcon /><BigText $mt={2}><T>Quick</T></BigText><BigText><T>Styles</T><DimCaret /></BigText></BigButton>
          <Stack $ml={1}>
            <Cmd dim icon={<FillIcon />} text="Shape Fill" caret ls={-0.3} />
            <Cmd dim icon={<OutlineIcon />} text="Shape Outline" caret ls={-0.3} />
            <Cmd dim icon={<EffectsIcon />} text="Shape Effects" caret ls={-0.3} />
          </Stack>
        </GroupBody>
        <GroupTitle $pr={12}><T>Drawing</T><Launcher><LauncherIcon /></Launcher></GroupTitle>
      </Group>
      <Group $w={54}>
        <GroupBody>
          <Stack $ml={2}>
            <Cmd icon={<FindIcon />} text="Find" />
            <Cmd icon={<ReplaceIcon />} text="Replace" caret />
            <Cmd icon={<PointerIcon />} text="Select" caret />
          </Stack>
        </GroupBody>
        <GroupTitle><T>Editing</T></GroupTitle>
      </Group>
    </Ribbon>
  );
}

function SlideView() {
  return (
    <SlideShadow>
      <Slide>
        <SlideArt width="476" height="357" viewBox="0 0 476 357">
          <defs>
            <linearGradient id="base" x1="0" y1="0" x2="1" y2="0.15">
              <stop offset="0" stopColor="#adadb2" /><stop offset=".25" stopColor="#8f8f91" /><stop offset=".6" stopColor="#6e6e6f" /><stop offset="1" stopColor="#585858" />
            </linearGradient>
            <linearGradient id="down" x1="0" y1="0" x2="0" y2="1">
              <stop offset=".3" stopColor="#555" stopOpacity="0" /><stop offset=".7" stopColor="#585858" stopOpacity=".45" /><stop offset="1" stopColor="#555" stopOpacity=".62" />
            </linearGradient>
            <filter id="soft" x="-30%" y="-30%" width="160%" height="160%"><feGaussianBlur stdDeviation="10" /></filter>
          </defs>
          <rect width="476" height="357" fill="url(#base)" />
          <rect width="476" height="357" fill="url(#down)" />
          <g filter="url(#soft)">
            <path d="M-20-20H25L150 100V200L60 260L-20 150z" fill="#bcbcc4" opacity=".42" />
            <path d="M45-15H110L230 90H130z" fill="#6a6a6c" opacity=".5" />
            <path d="M140-15H190L300 70H240z" fill="#8a8a8c" opacity=".3" />
            <path d="M-20 205L90 345H40L-20 270z" fill="#a8a8aa" opacity=".25" />
            <path d="M175 325L250 357H200z" fill="#bbb" opacity=".35" />
          </g>
        </SlideArt>
        <SlideTitle>Introduction</SlideTitle>
        <Board>
          <BoardTitle>Difference between data and information</BoardTitle>
          <Table>
            <Th>Data</Th>
            <Th>Information</Th>
            <List items={dataList} $pt={2} $s={10.8} $ls={0} />
            <List items={infoList} $pt={2} $s={11.4} $ls={0.22} />
          </Table>
        </Board>
      </Slide>
    </SlideShadow>
  );
}

export default function App() {
  return (
    <>
      <Global />
      <Page>
        <Share>
          <Desktop>
            <TitleBar>
              <QuickAccess><SaveIcon /><UndoIcon /><Caret /><RedoIcon /></QuickAccess>
              <QuickMore><Ico w={6} h={7}><path d="M.5 1h5" stroke="#445" /><path d="M.3 3h5.400L3 6z" fill="#445" /></Ico></QuickMore>
              <T $s={9} $ls={-0.16} $c="#222">DBMS DEMO - Microsoft PowerPoint</T>
              <WindowButtons>
                <Ico w={9}><path d="M1 5.500h8" stroke="#8a8a8a" strokeWidth=".8" /></Ico>
                <Ico w={9}><path d="M1 3h5.500v5H1zM2.500 3V1.500H8v5H6.500" stroke="#8a8a8a" strokeWidth=".8" /></Ico>
                <Ico w={9}><path d="M1 1.500l7 7M8 1.500l-7 7" stroke="#8a8a8a" strokeWidth=".8" /></Ico>
              </WindowButtons>
            </TitleBar>
            <OfficeButton><OfficeLogo /></OfficeButton>
            <TabRow>
              {tabs.map(([t, w, on]) => <Tab key={t} $w={w} $on={on}><T>{t}</T></Tab>)}
              <HelpSlot><HelpIcon /></HelpSlot>
            </TabRow>
            <RibbonBar />
            <Work>
              <TopRulerSlot>
                <HRuler>{hNums.map((n, i) => <HCell key={i}><Tick /><Dot /><T $s={8} $ls={0}>{n}</T><Dot /></HCell>)}<HMark /></HRuler>
              </TopRulerSlot>
              <LeftRulerSlot>
                <VRuler>{vNums.map((n, i) => <VCell key={i}><Tick $v /><Dot /><VNum>{n}</VNum><Dot /></VCell>)}<VMark /></VRuler>
              </LeftRulerSlot>
              <Canvas>
                <Swoosh width="130" height="50" viewBox="0 0 130 50"><path d="M0 0H123Q55 16 0 46z" fill="#bdd5f2" opacity=".35" /><path d="M0 0H118Q52 16 0 38z" fill="#bdd5f2" opacity=".4" /></Swoosh>
                <SlideView />
              </Canvas>
              <VScroll>
                <Track>
                  <Ico w={8} h={5}><path d="M0 5l4-4 4 4z" fill="#33507f" /></Ico>
                  <Thumb><ThumbGrip /></Thumb>
                  <Ico w={8} h={5}><path d="M0 0l4 4 4-4z" fill="#33507f" /></Ico>
                </Track>
                <PageArrows>
                  <Ico w={6} h={7}><path d="M0 3l3-3 3 3zM0 7l3-3 3 3z" fill="#111" /></Ico>
                  <Ico w={6} h={7}><path d="M0 0l3 3 3-3zM0 4l3 3 3-3z" fill="#111" /></Ico>
                </PageArrows>
              </VScroll>
            </Work>
            <Status>
              <Cell $w={49} $line><T>Slide 6 of 16</T></Cell>
              <Cell $w={33} $pl={4} $line><T>"Apex"</T></Cell>
              <Cell $w={23} $pl={3}><Ico w={13} h={11}><path d="M1 5l5-2 4 2v3l-5 2-4-2z" fill="#eef3fb" stroke="#5876a8" strokeWidth=".8" /><path d="M1 5l4 2 5-2" stroke="#5876a8" strokeWidth=".8" /><path d="M6 1l5 5M11 .5L7 6" stroke="#dc4a35" strokeWidth="1.500" /></Ico></Cell>
              <Cell $w={50} $line><T>English (U.S.)</T></Cell>
              <StatusRight>
                <Views>
                  <View $on><Ico w={9} h={8}><path d="M.5.500h8v7h-8zM3 .5v7M4.500 2.500h3v3h-3z" stroke="#6c6a5e" strokeWidth=".9" /></Ico></View>
                  <View><Ico w={9} h={8}><path d="M.5.500H3.500v2.500h-3zM5 .5h3v2.500H5zM.5 4.500h3v2.500h-3zM5 4.500h3v2.500H5z" stroke="#4d658e" strokeWidth=".9" /></Ico></View>
                  <View><Ico w={9} h={8}><path d="M.5.500h8M1.500.500v4h6v-4M4.500 4.500v3M2.500 7.500h4" stroke="#4d658e" /></Ico></View>
                </Views>
                <TrayCell $w={24}><T>66%</T></TrayCell>
                <Ico w={13}><circle cx="6.500" cy="6.500" r="5.500" fill="#e3ecf9" stroke="#5674a4" /><path d="M3.500 6.500h6" stroke="#3a5685" strokeWidth="1.400" /></Ico>
                <Ico w={75} h={12}><path d="M0 6.500h75" stroke="#7290bf" /><path d="M38 4v5" stroke="#7290bf" strokeWidth=".6" /><path d="M22 2h5v6l-2.500 2.500L22 8z" fill="#e9f1fb" stroke="#5674a4" strokeWidth=".9" /></Ico>
                <Ico w={13}><circle cx="6.500" cy="6.500" r="5.500" fill="#e3ecf9" stroke="#5674a4" /><path d="M3.500 6.500h6M6.500 3.500v6" stroke="#3a5685" strokeWidth="1.400" /></Ico>
                <TrayCell $w={20}><Ico w={11}><path d="M.5.500h10v10H.5z" fill="#f2f6fc" stroke="#8ea6cc" strokeWidth=".7" /><path d="M2 4V2h2M7 2h2v2M9 7v2H7M4 9H2V7M2 2l2.500 2.500M9 2L6.500 4.500M9 9L6.500 6.500M2 9l2.500-2.500" stroke="#3a5685" strokeWidth=".9" /></Ico></TrayCell>
              </StatusRight>
            </Status>
            <Taskbar>
              <Task $w={38} $pr={3}><StartIcon /></Task>
              <Task $w={37} $on $run><ChromeIcon /></Task>
              <Task $w={41} $pr={3}><FolderIcon /></Task>
              <Task $w={31} $run $pr={1}><PptIcon /></Task>
              <Tray>
                <TrayCell $w={18}><Ico w={9} h={6}><path d="M.8 5L4.500 1.200 8.200 5" stroke="#ddd" /></Ico></TrayCell>
                <TrayCell $w={18}><Ico w={10}><path d="M1 9.500A8.500 8.500 0 0 1 9.500 1M3.500 9.500a6 6 0 0 1 6-6M6 9.500A3.500 3.500 0 0 1 9.500 6" stroke="#c6c6c4" strokeWidth=".9" /><circle cx="8.800" cy="8.800" r=".9" fill="#eee" /></Ico></TrayCell>
                <TrayCell $w={18}><Ico w={12} h={9}><path d="M3 2.500h8v5H3z" stroke="#e8e8e8" /><path d="M5 4h4.500v2.200H5z" fill="#eee" /><path d="M1 0v2M3 0v2M.5 2.500h3M2 3v3" stroke="#e8e8e8" /></Ico></TrayCell>
                <TrayCell $w={18}><Ico w={12} h={10}><path d="M1 3.500h2L5.500 1v8L3 6.500H1z" stroke="#ddd" strokeWidth=".8" /><path d="M7 3.500q1 1.500 0 3M8.700 2.500q1.500 2.500 0 5M10.300 1.500q2 3.500 0 7" stroke="#bbb" strokeWidth=".7" /></Ico></TrayCell>
                <TrayCell $w={29}><T $s={9} $ls={-0.4}>ENG</T></TrayCell>
                <Clock><T $s={9} $ls={-0.05}>20:27</T><T $s={9} $ls={0}>28-07-2020</T></Clock>
                <TrayCell $w={37}><Badge><Ico w={13} h={13}><path d="M0 0h12v9H6l-3 3V9H0z" fill="#fff" /><path d="M2.500 3h7M2.500 5.500h7" stroke="#555" strokeWidth=".8" /></Ico><Count><T $s={8} $ls={0}>3</T></Count></Badge></TrayCell>
                <PeekLine />
              </Tray>
            </Taskbar>
            <Cursor width="11" height="15" viewBox="0 0 10 14"><path d="M1 1v10.500l2.400-2.200 1.700 3.900 1.900-.8-1.700-3.800H9z" fill="#fff" stroke="#333" strokeWidth=".8" /></Cursor>
            <ShareBar>
              <Grip />
              <Message><T $s={9.2} $ls={-0.42}>meet.google.com is sharing your screen.</T></Message>
              <StopButton><T $s={9} $b={600} $ls={-0.3}>Stop sharing</T></StopButton>
              <T $s={9.2} $ls={-0.2} $c="#4f7fc4">Hide</T>
            </ShareBar>
          </Desktop>
        </Share>
        <Side>
          <Tile>
            <Avatar><Initial>k</Initial></Avatar>
            <Name><T $s={13} $ls={-0.55}>kurumallas CSE</T></Name>
          </Tile>
        </Side>
      </Page>
    </>
  );
}
